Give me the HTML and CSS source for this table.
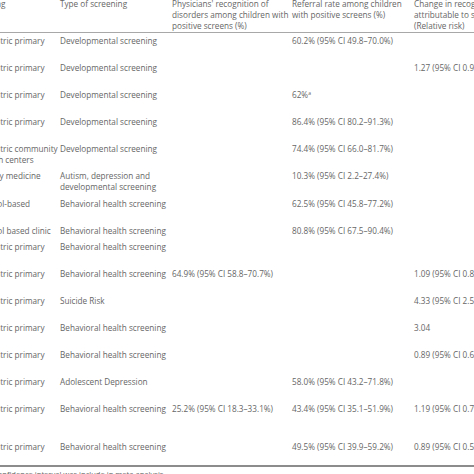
FILE: index.html
```html
<!DOCTYPE html>
<html>
<head>
<meta charset="utf-8">
<link rel="stylesheet" href="styles.css">
</head>
<body>
<div class="table">
  <div class="row head">
    <div>Setting</div>
    <div>Type of screening</div>
    <div>Physicians' recognition of<br>disorders among children with<br>positive screens (%)</div>
    <div>Referral rate among children<br>with positive screens (%)</div>
    <div>Change in recognition<br>attributable to screening<br>(Relative risk)</div>
  </div>
  <div class="row"><div>Pediatric primary<br>care</div><div>Developmental screening</div><div></div><div>60.2% (95% CI 49.8–70.0%)</div><div></div></div>
  <div class="row"><div>Pediatric primary<br>care</div><div>Developmental screening</div><div></div><div></div><div>1.27 (95% CI 0.97–1.66)</div></div>
  <div class="row"><div>Pediatric primary<br>care</div><div>Developmental screening</div><div></div><div>62%<sup>a</sup></div><div></div></div>
  <div class="row"><div>Pediatric primary<br>care</div><div>Developmental screening</div><div></div><div>86.4% (95% CI 80.2–91.3%)</div><div></div></div>
  <div class="row"><div>Pediatric community<br>health centers</div><div>Developmental screening</div><div></div><div>74.4% (95% CI 66.0–81.7%)</div><div></div></div>
  <div class="row"><div>Family medicine</div><div>Autism, depression and<br>developmental screening</div><div></div><div>10.3% (95% CI 2.2–27.4%)</div><div></div></div>
  <div class="row"><div>School-based<br>clinic</div><div>Behavioral health screening</div><div></div><div>62.5% (95% CI 45.8–77.2%)</div><div></div></div>
  <div class="row"><div>School based clinic</div><div>Behavioral health screening</div><div></div><div>80.8% (95% CI 67.5–90.4%)</div><div></div></div>
  <div class="row"><div>Pediatric primary<br>care</div><div>Behavioral health screening</div><div></div><div></div><div></div></div>
  <div class="row"><div>Pediatric primary<br>care</div><div>Behavioral health screening</div><div>64.9% (95% CI 58.8–70.7%)</div><div></div><div>1.09 (95% CI 0.83–1.43)</div></div>
  <div class="row"><div>Pediatric primary<br>care</div><div>Suicide Risk</div><div></div><div></div><div>4.33 (95% CI 2.55–7.35)</div></div>
  <div class="row"><div>Pediatric primary<br>care</div><div>Behavioral health screening</div><div></div><div></div><div>3.04</div></div>
  <div class="row"><div>Pediatric primary<br>care</div><div>Behavioral health screening</div><div></div><div></div><div>0.89 (95% CI 0.62–1.28)</div></div>
  <div class="row"><div>Pediatric primary<br>care</div><div>Adolescent Depression</div><div></div><div>58.0% (95% CI 43.2–71.8%)</div><div></div></div>
  <div class="row tall"><div>Pediatric primary<br>care</div><div>Behavioral health screening</div><div>25.2% (95% CI 18.3–33.1%)</div><div>43.4% (95% CI 35.1–51.9%)</div><div>1.19 (95% CI 0.79–1.79)</div></div>
  <div class="row last"><div>Pediatric primary<br>care</div><div>Behavioral health screening</div><div></div><div>49.5% (95% CI 39.9–59.2%)</div><div>0.89 (95% CI 0.56–1.41)</div></div>
  <p class="note"><sup>a</sup>No confidence interval was include in meta analysis</p>
</div>
</body>
</html>
```

FILE: styles.css
```css
html, body {
  margin: 0;
  padding: 0;
  overflow: hidden;
  background: #fff;
}
body {
  width: 474px;
  height: 474px;
  font-family: "Open Sans", "Noto Sans", sans-serif;
  font-size: 8.2px;
  line-height: 11px;
  color: #666;
}
.table {
  width: 600px;
  margin: -2px 0 0 -21px;
}
.row {
  display: grid;
  grid-template-columns: 81px 112px 120px 122px 160px;
  padding: 2px 0 3.1px;
  white-space: nowrap;
}
.row.head {
  padding: 0 0 1px;
  border-bottom: 1px solid #a8a8a8;
}
.row.tall {
  min-height: 33px;
  box-sizing: content-box;
}
.row.last {
  border-bottom: 2px solid #8c8c8c;
  padding-bottom: 2px;
}
sup {
  font-size: 5px;
  line-height: 0;
  vertical-align: 3px;
}
.note {
  margin: 2px 0 0;
  font-size: 7.6px;
}
```
